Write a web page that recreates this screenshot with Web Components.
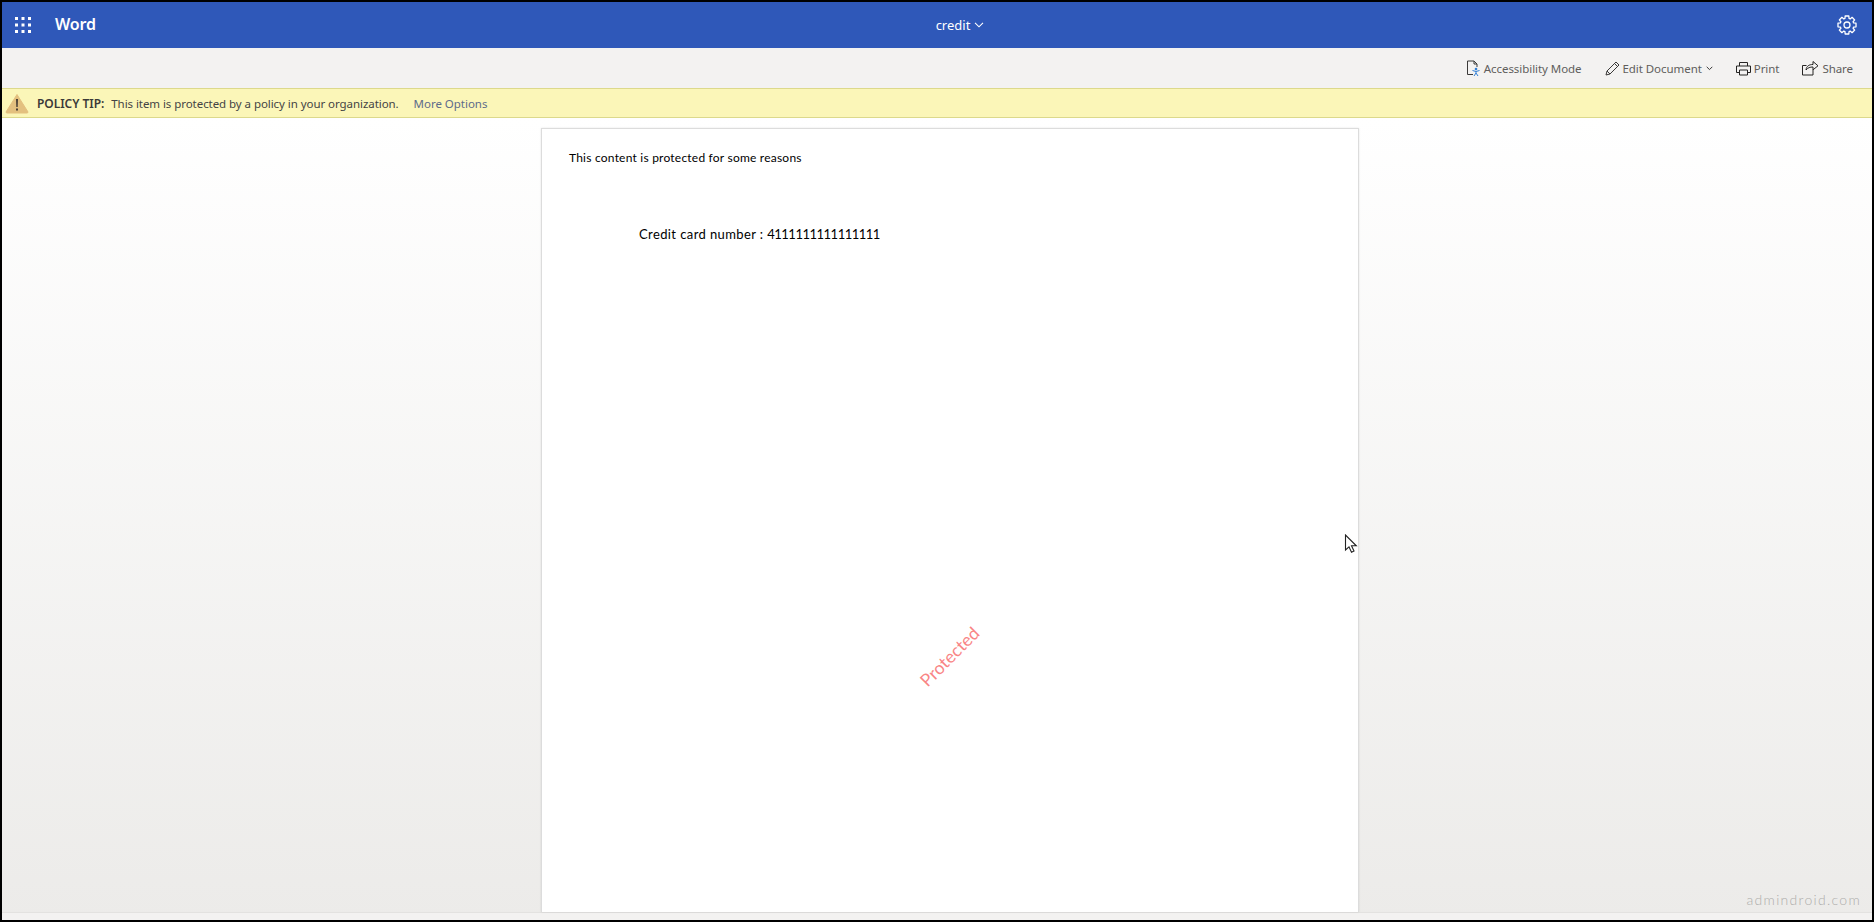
<!DOCTYPE html>
<html lang="en">
<head>
<meta charset="utf-8">
<title>credit - Word</title>
<style>
  html, body { margin: 0; height: 100%; background: #000; overflow: hidden; }
  body { font-family: "Noto Sans", "Open Sans", sans-serif; }
</style>
</head>
<body>
<word-app>
  <suite-bar slot="top" app="Word" doc="credit"></suite-bar>
  <doc-toolbar slot="top">
    <tool-button label="Accessibility Mode" icon="access"></tool-button>
    <tool-button label="Edit Document" icon="edit" caret></tool-button>
    <tool-button label="Print" icon="print"></tool-button>
    <tool-button label="Share" icon="share"></tool-button>
  </doc-toolbar>
  <policy-tip slot="top" link="More Options">This item is protected by a policy in your organization.</policy-tip>
  <doc-page watermark="Protected">
    <p class="small">This content is protected for some reasons</p>
    <p class="card"><span style="letter-spacing:.4px">Credit card number : </span><span style="letter-spacing:-.5px">4111111111111111</span></p>
  </doc-page>
</word-app>

<script>
/* Suite bar: waffle, app name, doc title, settings */
class SuiteBar extends HTMLElement {
  constructor() {
    super();
    this.attachShadow({ mode: 'open' });
  }

  connectedCallback() {
    const dots = [];
    for (let y = 0; y < 3; y++) {
      for (let x = 0; x < 3; x++) {
        dots.push(`<rect x="${x * 6.5}" y="${y * 6.5}" width="3" height="3"/>`);
      }
    }
    // gear outline: 8 teeth round the centre
    let gear = '';
    for (let i = 0; i < 8; i++) {
      const a = i * Math.PI / 4;
      const pt = (r, d) => {
        const b = a + d;
        return `${(10 + r * Math.sin(b)).toFixed(2)} ${(10 - r * Math.cos(b)).toFixed(2)}`;
      };
      gear += `${i ? 'L' : 'M'}${pt(6.9, -0.3)}L${pt(9.2, -0.2)}L${pt(9.2, 0.2)}L${pt(6.9, 0.3)}`;
    }
    this.shadowRoot.innerHTML = `
      <style>
        :host {
          display: grid;
          grid-template-columns: 1fr auto 1fr;
          align-items: center;
          height: 46px;
          background: #2f58b9;
          color: #fff;
        }
        .left { display: flex; align-items: center; padding-left: 13px; }
        .left svg { fill: #fff; display: block; }
        .name { margin-left: 24px; font: 600 16px "Noto Sans", sans-serif; letter-spacing: -0.1px; position: relative; top: -1px; }
        .doc { display: flex; align-items: center; gap: 4px; margin-left: 46px; font: 400 13px "Noto Sans", sans-serif; }
        .right { display: flex; justify-content: flex-end; padding-right: 15px; }
      </style>
      <div class="left">
        <svg width="16" height="16" viewBox="0 0 16 16" aria-hidden="true">${dots.join('')}</svg>
        <span class="name">${this.getAttribute('app')}</span>
      </div>
      <div class="doc">
        <span>${this.getAttribute('doc')}</span>
        <svg width="10" height="6" viewBox="0 0 10 6" fill="none" stroke="#fff" stroke-width="1.1" aria-hidden="true"><path d="M1 .8l4 4 4-4"/></svg>
      </div>
      <div class="right">
        <svg width="20" height="20" viewBox="0 0 20 20" fill="none" stroke="#fff" stroke-width="1.3" stroke-linejoin="round" aria-hidden="true">
          <circle cx="10" cy="10" r="3"/>
          <path d="${gear}Z"/>
        </svg>
      </div>
    `;
  }
}
customElements.define('suite-bar', SuiteBar);

const TOOL_ICONS = {
  access: `<svg width="15" height="17" viewBox="0 0 15 17" fill="none" aria-hidden="true">
      <path d="M7 14.500H1.500V1h6.500l3 3v3" stroke="#3b3a39"/><path d="M8 1v3h3" stroke="#3b3a39"/>
      <circle cx="10" cy="9" r="1.300" fill="#2f7fd6"/>
      <path d="M6.500 10.500l3.500 1 3.500-1M10 11.500v1.500l-2 3M10 13l2 3" stroke="#2f7fd6"/></svg>`,
  edit: `<svg width="15" height="15" viewBox="0 0 15 15" fill="none" stroke="#3b3a39" aria-hidden="true">
      <path d="M1 14l1-4L11 1l3 3-9 9z"/><path d="M2 10l3 3M9.500 2.500l3 3"/></svg>`,
  print: `<svg width="15" height="15" viewBox="0 0 15 15" fill="none" stroke="#252423" aria-hidden="true">
      <path d="M3.500 5V1.500h8V5M3.500 11.500H.5V5h14v6.500h-3"/><path d="M3.500 9h8v5h-8z"/></svg>`,
  share: `<svg width="17" height="16" viewBox="0 0 17 16" fill="none" stroke="#252423" aria-hidden="true">
      <path d="M11 9.500v5.500H.5V5.500h4"/><path d="M4 10c.5-4 3-5.500 7-5.500V1.500l5 4.300-5 4V7c-3 0-5 .6-7 3z"/></svg>`
};

/* Command in the reading toolbar */
class ToolButton extends HTMLElement {
  constructor() {
    super();
    this.attachShadow({ mode: 'open' });
  }

  connectedCallback() {
    const caret = this.hasAttribute('caret')
      ? '<svg width="7" height="5" viewBox="0 0 7 5" fill="none" stroke="#3b3a39" aria-hidden="true"><path d="M.7.8l2.800 2.800L6.300.8"/></svg>'
      : '';
    this.shadowRoot.innerHTML = `
      <style>
        :host { display: inline-flex; align-items: center; gap: 3px; color: #605e5c; font-size: 11.500px; letter-spacing: -.06px; white-space: nowrap; }
        svg { display: block; flex: none; }
        .caret { margin-left: 1px; display: flex; }
      </style>
      ${TOOL_ICONS[this.getAttribute('icon')] || ''}
      <span>${this.getAttribute('label')}</span>
      ${caret ? `<span class="caret">${caret}</span>` : ''}
    `;
  }
}
customElements.define('tool-button', ToolButton);

class DocToolbar extends HTMLElement {
  constructor() {
    super();
    this.attachShadow({ mode: 'open' });
    this.shadowRoot.innerHTML = `
      <style>
        :host {
          display: flex;
          justify-content: flex-end;
          align-items: center;
          gap: 23px;
          height: 40px;
          padding-right: 19px;
          background: #f3f2f1;
        }
      </style>
      <slot></slot>
    `;
  }
}
customElements.define('doc-toolbar', DocToolbar);

/* Yellow policy notification */
class PolicyTip extends HTMLElement {
  constructor() {
    super();
    this.attachShadow({ mode: 'open' });
  }

  connectedCallback() {
    this.shadowRoot.innerHTML = `
      <style>
        :host {
          display: flex;
          align-items: center;
          height: 28px;
          padding-left: 3px;
          background: #fbf6b8;
          border-top: 1px solid #dcd98c;
          border-bottom: 1px solid #dcd98c;
          font-size: 11.500px;
          color: #444;
          white-space: nowrap;
        }
        svg { display: block; flex: none; }
        b { margin-left: 8px; font-size: 12px; font-weight: 600; color: #3b3a39; letter-spacing: -.05px; }
        .msg { margin-left: 7px; letter-spacing: -.06px; }
        .link { margin-left: 15px; color: #5d6b8a; letter-spacing: -.03px; }
      </style>
      <svg width="24" height="21" viewBox="0 0 24 21" aria-hidden="true">
        <path d="M12 1.500L23 19a1 1 0 0 1-1 1H2a1 1 0 0 1-1-1z" fill="#e3c07f" stroke="#e3c07f" stroke-linejoin="round"/>
        <path d="M11 6h2l-.3 8h-1.400zM11 15.500h2v2h-2z" fill="#4a4036"/>
      </svg>
      <b>POLICY TIP:</b>
      <span class="msg"><slot></slot></span>
      <span class="link">${this.getAttribute('link')}</span>
    `;
  }
}
customElements.define('policy-tip', PolicyTip);

/* White sheet with the diagonal watermark */
class DocPage extends HTMLElement {
  constructor() {
    super();
    this.attachShadow({ mode: 'open' });
  }

  connectedCallback() {
    this.shadowRoot.innerHTML = `
      <style>
        :host {
          display: block;
          position: relative;
          box-sizing: border-box;
          width: 818px;
          height: 784px;
          padding: 20px 27px;
          background: #fff;
          border: 1px solid #dcdcdc;
          border-bottom: 0;
          box-shadow: 0 0 2px rgba(0,0,0,.1);
          color: #000;
        }
        .mark {
          position: absolute;
          left: 370px;
          top: 517px;
          transform: rotate(-45deg);
          font: 400 17.500px "Lato", sans-serif;
          color: #f98585;
        }
        ::slotted(.small) {
          margin: 0;
          font: 400 12px/17px "Lato", sans-serif;
          letter-spacing: .22px;
        }
        ::slotted(.card) {
          margin: 58px 0 0 70px;
          font: 400 13px/20px "Lato", sans-serif;
        }
      </style>
      <slot></slot>
      <div class="mark">${this.getAttribute('watermark')}</div>
    `;
  }
}
customElements.define('doc-page', DocPage);

class WordApp extends HTMLElement {
  constructor() {
    super();
    this.attachShadow({ mode: 'open' });
    this.shadowRoot.innerHTML = `
      <style>
        :host {
          display: flex;
          flex-direction: column;
          position: relative;
          box-sizing: border-box;
          width: 1874px;
          height: 922px;
          border: 2px solid #000;
          background: #f3f2f1;
        }
        .view {
          flex: 1;
          min-height: 0;
          display: flex;
          justify-content: center;
          padding: 10px 0 8px 26px;
          background: linear-gradient(#fff, #ecebe9);
        }
        .strip { height: 8px; margin-top: -8px; background: #f3f2f1; border-top: 1px solid #e3e2e0; box-sizing: border-box; }
        .cursor { position: absolute; left: 1342px; top: 532px; }
        .credit {
          position: absolute;
          right: 11px;
          bottom: 12px;
          font: 300 14px "Lato", sans-serif;
          letter-spacing: 1.300px;
          color: #aeadab;
        }
      </style>
      <slot name="top"></slot>
      <div class="view"><slot></slot></div>
      <div class="strip"></div>
      <svg class="cursor" width="14" height="20" viewBox="0 0 14 20" aria-hidden="true">
        <path d="M1.500 1v15l3.500-3.200 2.500 5.500 2.500-1.200-2.500-5.300h4.800z" fill="#fff" stroke="#222" stroke-width="1.100"/>
      </svg>
      <div class="credit">admindroid.com</div>
    `;
  }
}
customElements.define('word-app', WordApp);
</script>
</body>
</html>
